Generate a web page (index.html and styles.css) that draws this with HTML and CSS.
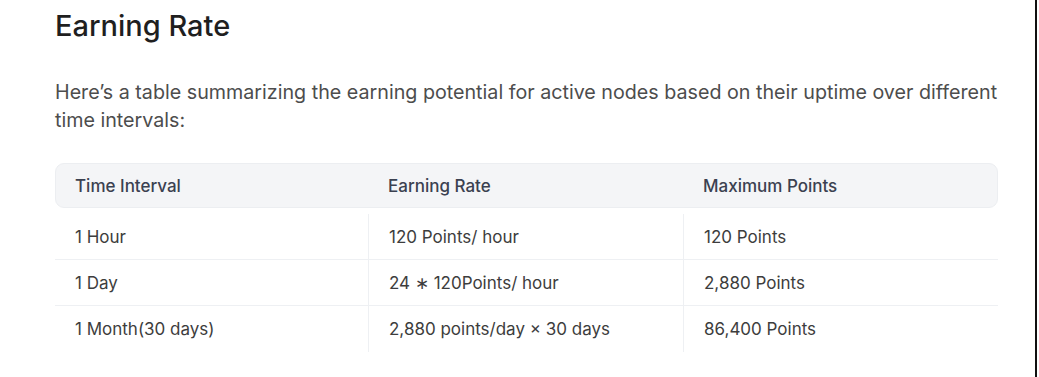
FILE: index.html
```html
<!DOCTYPE html>
<html>
<head>
<meta charset="utf-8">
<link rel="stylesheet" href="styles.css">
</head>
<body>
<div class="frame">
  <main class="content">
    <h2 class="title">Earning Rate</h2>
    <p class="intro">Here’s a table summarizing the earning potential for active nodes based on their uptime over different time intervals:</p>
    <div class="table">
      <div class="thead">
        <div class="th">Time Interval</div>
        <div class="th">Earning Rate</div>
        <div class="th">Maximum Points</div>
      </div>
      <div class="tbody">
        <div class="row">
          <div class="td">1 Hour</div>
          <div class="td">120 Points/ hour</div>
          <div class="td">120 Points</div>
        </div>
        <div class="row">
          <div class="td">1 Day</div>
          <div class="td">24 ∗ 120Points/ hour</div>
          <div class="td">2,880 Points</div>
        </div>
        <div class="row last">
          <div class="td">1 Month(30 days)</div>
          <div class="td">2,880 points/day × 30 days</div>
          <div class="td">86,400 Points</div>
        </div>
      </div>
    </div>
  </main>
</div>
</body>
</html>
```

FILE: styles.css
```css
html, body {
  margin: 0;
  padding: 0;
  background: #ffffff;
}
body {
  font-family: Inter, "Noto Sans", sans-serif;
  width: 1039px;
  height: 377px;
  overflow: hidden;
}
.frame {
  width: 1037px;
  height: 377px;
  border-right: 2px solid #111111;
  box-sizing: border-box;
}
.content {
  padding: 8px 0 0 55px;
  width: 943px;
}
.title {
  margin: 0;
  font-size: 29px;
  line-height: 36px;
  font-weight: 500;
  color: #1f1f1f;
}
.intro {
  margin: 34px 0 0 0;
  font-size: 19.7px;
  line-height: 28px;
  color: #4d4d4d;
}
.table {
  margin-top: 29px;
  font-size: 17px;
}
.thead {
  display: grid;
  grid-template-columns: 313px 315px 315px;
  height: 45px;
  background: #f4f5f7;
  border: 1px solid #eceef1;
  border-radius: 9px;
  box-sizing: border-box;
  align-items: center;
  color: #3b4150;
  font-weight: 500;
}
.th {
  padding-left: 19px;
}
.tbody {
  margin-top: 6px;
}
.row {
  display: grid;
  grid-template-columns: 313px 315px 315px;
  height: 46px;
  border-bottom: 1px solid #eef0f3;
  box-sizing: border-box;
  color: #3d3d3d;
}
.row.last {
  border-bottom: none;
}
.td {
  padding-left: 20px;
  display: flex;
  align-items: center;
}
.td + .td {
  border-left: 1px solid #eef0f3;
}
```
